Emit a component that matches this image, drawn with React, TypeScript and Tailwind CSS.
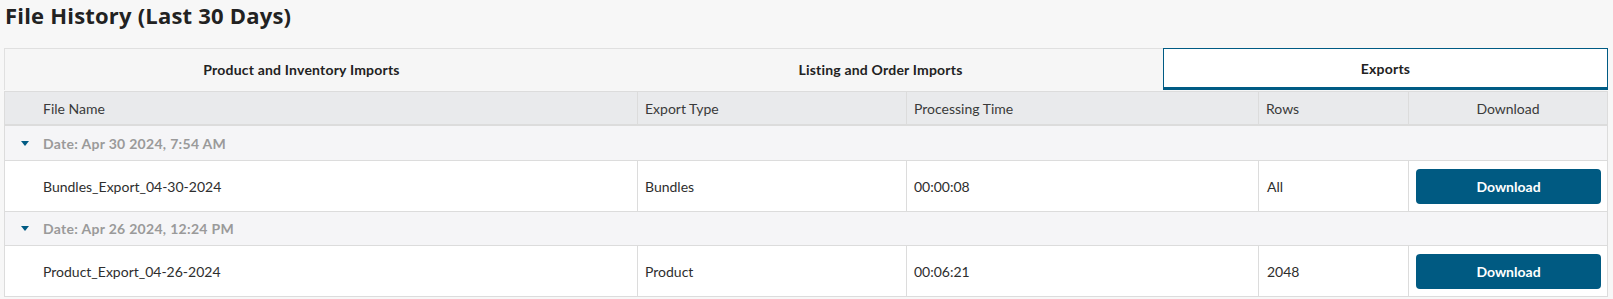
import { useState } from 'react'

type ExportRow = {
  date: string
  fileName: string
  exportType: string
  processingTime: string
  rows: string
}

const rows: ExportRow[] = [
  {
    date: 'Apr 30 2024, 7:54 AM',
    fileName: 'Bundles_Export_04-30-2024',
    exportType: 'Bundles',
    processingTime: '00:00:08',
    rows: 'All',
  },
  {
    date: 'Apr 26 2024, 12:24 PM',
    fileName: 'Product_Export_04-26-2024',
    exportType: 'Product',
    processingTime: '00:06:21',
    rows: '2048',
  },
]

const tabs = [
  { id: 'product', label: 'Product and Inventory Imports', width: 'w-[594px]' },
  { id: 'listing', label: 'Listing and Order Imports', width: 'w-[565px]' },
  { id: 'exports', label: 'Exports', width: 'flex-1' },
]

const gridCols = 'grid grid-cols-[632px_269px_352px_150px_1fr]'

export default function App() {
  const [activeTab, setActiveTab] = useState('exports')

  return (
    <div
      className="min-h-screen bg-[#f7f7f7] text-[#2e2e2e]"
      style={{ fontFamily: 'Lato, "Open Sans", sans-serif' }}
    >
      {/* Title */}
      <h1
        className="pl-[5px] text-[22px] font-bold leading-[30px] tracking-[0.2px] text-[#222]"
        style={{ fontFamily: '"Open Sans", Lato, sans-serif' }}
      >
        File History (Last 30 Days)
      </h1>

      <div className="ml-[4px] mr-[5px] mt-[18px]">
        {/* Tabs */}
        <div className="flex h-[42px]">
          {tabs.map((tab, i) => {
            const active = activeTab === tab.id
            return (
              <button
                key={tab.id}
                onClick={() => setActiveTab(tab.id)}
                className={`${tab.width} flex items-center justify-center text-[14px] font-bold tracking-[0.2px] text-[#222] ${
                  active
                    ? 'border border-b-[3px] border-[#005b84] bg-white'
                    : `border-t border-[#e0e0e0] bg-[#f6f6f6] ${i === 0 ? 'border-l' : ''}`
                }`}
              >
                {tab.label}
              </button>
            )
          })}
        </div>

        {/* Table */}
        <div className="mt-[1px] border-x border-b border-[#dcdcdc] text-[14px]">
          {/* Header */}
          <div className={`${gridCols} h-[35px] border-t border-b-2 border-[#dcdcdc] bg-[#e9eaec] text-[#3a3a3a]`}>
            <div className="flex items-center pl-[38px]">File Name</div>
            <div className="flex items-center border-l border-[#dcdcdc] pl-[7px]">Export Type</div>
            <div className="flex items-center border-l border-[#dcdcdc] pl-[7px]">Processing Time</div>
            <div className="flex items-center border-l border-[#dcdcdc] pl-[7px]">Rows</div>
            <div className="flex items-center justify-center border-l border-[#dcdcdc]">Download</div>
          </div>

          {rows.map((row, i) => (
            <div key={row.fileName}>
              {/* Group row */}
              <div
                className={`flex h-[34px] items-center bg-[#f5f5f7] ${i > 0 ? 'border-t border-[#dcdcdc]' : ''}`}
              >
                <svg width="8" height="5" viewBox="0 0 8 5" className="ml-[16px] mr-[14px]">
                  <path d="M0 0h8L4 5z" fill="#005b84" />
                </svg>
                <span className="font-bold tracking-[0.3px] text-[#9a9a9a]">Date: {row.date}</span>
              </div>

              {/* Data row */}
              <div className={`${gridCols} h-[51px] border-t border-[#dcdcdc] bg-white`}>
                <div className="flex items-center pl-[38px]">{row.fileName}</div>
                <div className="flex items-center border-l border-[#dcdcdc] pl-[7px]">{row.exportType}</div>
                <div className="flex items-center border-l border-[#dcdcdc] pl-[7px]">{row.processingTime}</div>
                <div className="flex items-center border-l border-[#dcdcdc] pl-[8px]">{row.rows}</div>
                <div className="flex items-center border-l border-[#dcdcdc] pl-[7px] pr-[6px]">
                  <button className="h-[35px] w-full rounded-[4px] bg-[#005a82] font-bold text-white">
                    Download
                  </button>
                </div>
              </div>
            </div>
          ))}
        </div>
      </div>
    </div>
  )
}
